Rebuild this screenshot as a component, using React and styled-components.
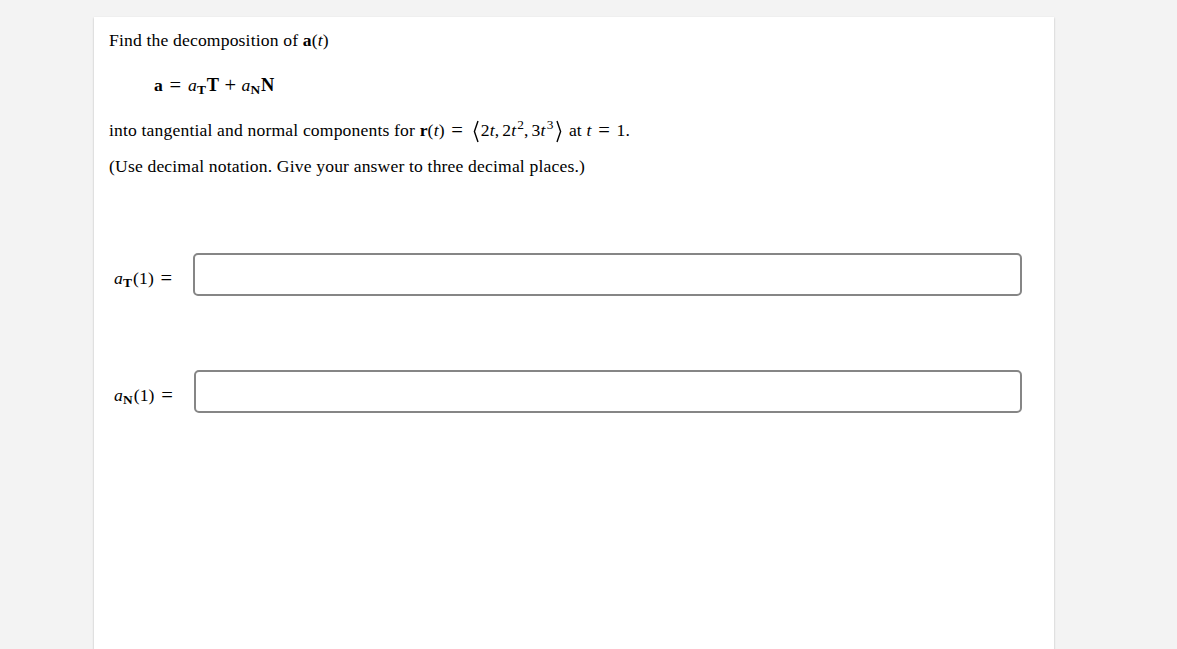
import React from 'react'
import styled, { createGlobalStyle } from 'styled-components'

const GlobalStyle = createGlobalStyle`
  body {
    margin: 0;
    background-color: #f3f3f3;
  }
`

const Page = styled.div`
  box-sizing: border-box;
  height: 100vh;
  padding: 17px 123px 0 94px;
  overflow: hidden;
  font-family: 'Liberation Serif', 'Times New Roman', serif;
  font-size: 17.6px;
  letter-spacing: 0.16px;
  color: #000;
`

const Card = styled.main`
  box-sizing: border-box;
  height: 100%;
  padding: 11px 32px 0 15px;
  background-color: #fff;
  box-shadow: 0 1px 2px rgba(0, 0, 0, 0.25);
`

const Line = styled.p`
  margin: 0;
  margin-bottom: ${props => props.$after || 0}px;
  padding-left: ${props => props.$indent || 0}px;
  height: 24px;
  line-height: 24px;
  white-space: nowrap;
`

const Op = styled.span`
  margin: 0 ${props => props.$space || 6.6}px;
  font-size: 20.6px;
  line-height: 0;
  vertical-align: -1px;
`

const Comma = styled.span`
  margin-right: 3px;
`

const Bold = styled.b`
  font-size: 18.4px;
  line-height: 0;
`

const Sub = styled.b`
  position: relative;
  top: 3px;
  margin-right: 1px;
  font-size: 13.4px;
  letter-spacing: 0;
  line-height: 0;
`

const Sup = styled.span`
  position: relative;
  top: -7px;
  margin-left: 1px;
  font-size: 13.4px;
  letter-spacing: 0;
  line-height: 0;
`

const Angle = styled.svg`
  width: 6px;
  height: 24px;
  margin: 0 2px 0 3px;
  vertical-align: -7px;
  fill: none;
  stroke: #000;
  stroke-width: 1.4;
`

const Answer = styled.div`
  display: flex;
  align-items: center;
  height: 43px;
  margin-top: ${props => props.$top}px;
`

const Label = styled.label`
  box-sizing: border-box;
  flex: none;
  width: ${props => props.$width}px;
  padding: 6px 0 0 5px;
  line-height: 24px;
  white-space: nowrap;
`

const Input = styled.input`
  box-sizing: border-box;
  flex: 1;
  min-width: 0;
  height: 43px;
  padding: 0 10px;
  border: 2px solid #868686;
  border-radius: 5px;
  background-color: #fff;
  font: inherit;
  outline: none;
`

const Component = ({ name }) => (
  <>
    <i>a</i>
    <Sub>{name}</Sub>
  </>
)

const answers = [
  { name: 'T', width: 84, top: 75 },
  { name: 'N', width: 85, top: 74 }
]

export default function App() {
  return (
    <Page>
      <GlobalStyle />
      <Card>
        <Line $after={21}>
          Find the decomposition of <b>a</b>(<i>t</i>)
        </Line>
        <Line $indent={45} $after={21}>
          <b>a</b>
          <Op>=</Op>
          <Component name="T" />
          <Bold>T</Bold>
          <Op $space={5.2}>+</Op>
          <Component name="N" />
          <Bold>N</Bold>
        </Line>
        <Line $after={12}>
          into tangential and normal components for <b>r</b>(<i>t</i>)
          <Op>=</Op>
          <Angle viewBox="0 0 6 24">
            <path d="M5 2 L1.4 12.5 L5 23" />
          </Angle>
          2<i>t</i>
          <Comma>,</Comma>2<i>t</i>
          <Sup>2</Sup>
          <Comma>,</Comma>3<i>t</i>
          <Sup>3</Sup>
          <Angle viewBox="0 0 6 24">
            <path d="M1 2 L4.6 12.5 L1 23" />
          </Angle>
          {' at '}
          <i>t</i>
          <Op>=</Op>1.
        </Line>
        <Line>(Use decimal notation. Give your answer to three decimal places.)</Line>
        {answers.map(({ name, width, top }) => (
          <Answer key={name} $top={top}>
            <Label htmlFor={name} $width={width}>
              <Component name={name} />
              (1)
              <Op>=</Op>
            </Label>
            <Input id={name} type="text" />
          </Answer>
        ))}
      </Card>
    </Page>
  )
}
